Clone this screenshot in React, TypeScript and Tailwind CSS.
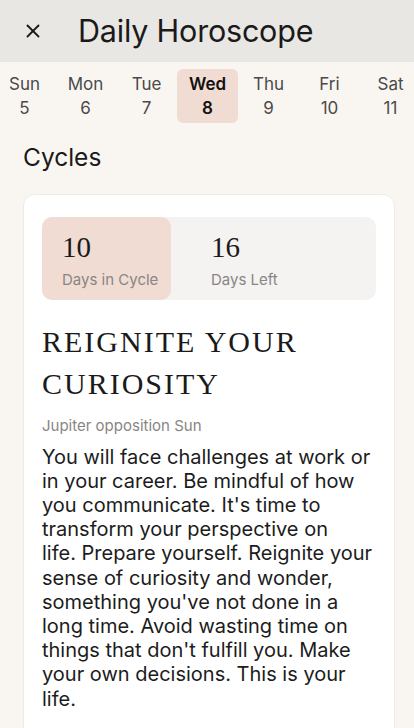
import { X } from "lucide-react";

const days = [
  { d: "Sun", n: 5 },
  { d: "Mon", n: 6 },
  { d: "Tue", n: 7 },
  { d: "Wed", n: 8 },
  { d: "Thu", n: 9 },
  { d: "Fri", n: 10 },
  { d: "Sat", n: 11 },
];

const lines = [
  "You will face challenges at work or",
  "in your career. Be mindful of how",
  "you communicate. It's time to",
  "transform your perspective on",
  "life. Prepare yourself. Reignite your",
  "sense of curiosity and wonder,",
  "something you've not done in a",
  "long time. Avoid wasting time on",
  "things that don't fulfill you. Make",
  "your own decisions. This is your",
  "life.",
];

export default function App() {
  return (
    <div className="h-screen w-full bg-[#f9f6f2] font-['Inter',sans-serif] text-[#1a1a1a] overflow-hidden">
      {/* Header */}
      <div className="h-[62px] bg-[#e9e7e4] flex items-center">
        <X className="ml-[22px] w-[22px] h-[22px]" strokeWidth={2} />
        <h1 className="ml-[34px] text-[30.5px] leading-none tracking-[-0.2px]">Daily Horoscope</h1>
      </div>

      {/* Day strip */}
      <div className="flex ml-[-6px] pt-[7px]">
        {days.map((x) => (
          <div
            key={x.d}
            className={
              "w-[61px] h-[54px] shrink-0 flex flex-col items-center justify-center rounded-md " +
              (x.d === "Wed" ? "bg-[#f0dcd3] font-semibold text-[#111]" : "text-[#4a4a4a]")
            }
          >
            <span className="text-[17px] leading-[24px]">{x.d}</span>
            <span className="text-[17px] leading-[24px]">{x.n}</span>
          </div>
        ))}
      </div>

      {/* Cycles */}
      <h2 className="mt-[19px] ml-[23px] text-[24.5px] leading-[30px]">Cycles</h2>

      <div className="mt-[22px] ml-[23px] mr-[19px] bg-white rounded-xl border border-[#eeebe7] px-[18px] pt-[22px] pb-[80px]">
        <div className="flex bg-[#f4f3f2] rounded-[10px] h-[83px]">
          <div className="w-[129px] bg-[#f0dcd3] rounded-[10px] pl-[20px] pt-[14px]">
            <div className="font-['Liberation_Serif',serif] text-[29px] leading-[32px]">10</div>
            <div className="mt-[6px] text-[15px] text-[#8a8583]">Days in Cycle</div>
          </div>
          <div className="pl-[40px] pt-[14px]">
            <div className="font-['Liberation_Serif',serif] text-[29px] leading-[32px]">16</div>
            <div className="mt-[6px] text-[15px] text-[#8a8583]">Days Left</div>
          </div>
        </div>

        <h3 className="mt-[21px] font-['Liberation_Serif',serif] text-[30px] leading-[42px] tracking-[2px] uppercase">
          Reignite your curiosity
        </h3>
        <div className="mt-[10px] text-[15px] text-[#8a8583]">Jupiter opposition Sun</div>
        <p className="mt-[7px] text-[20px] leading-[24.2px] text-[#1c1c1c]">
          {lines.map((l) => (
            <span key={l} className="block whitespace-nowrap">
              {l}
            </span>
          ))}
        </p>
      </div>
    </div>
  );
}
